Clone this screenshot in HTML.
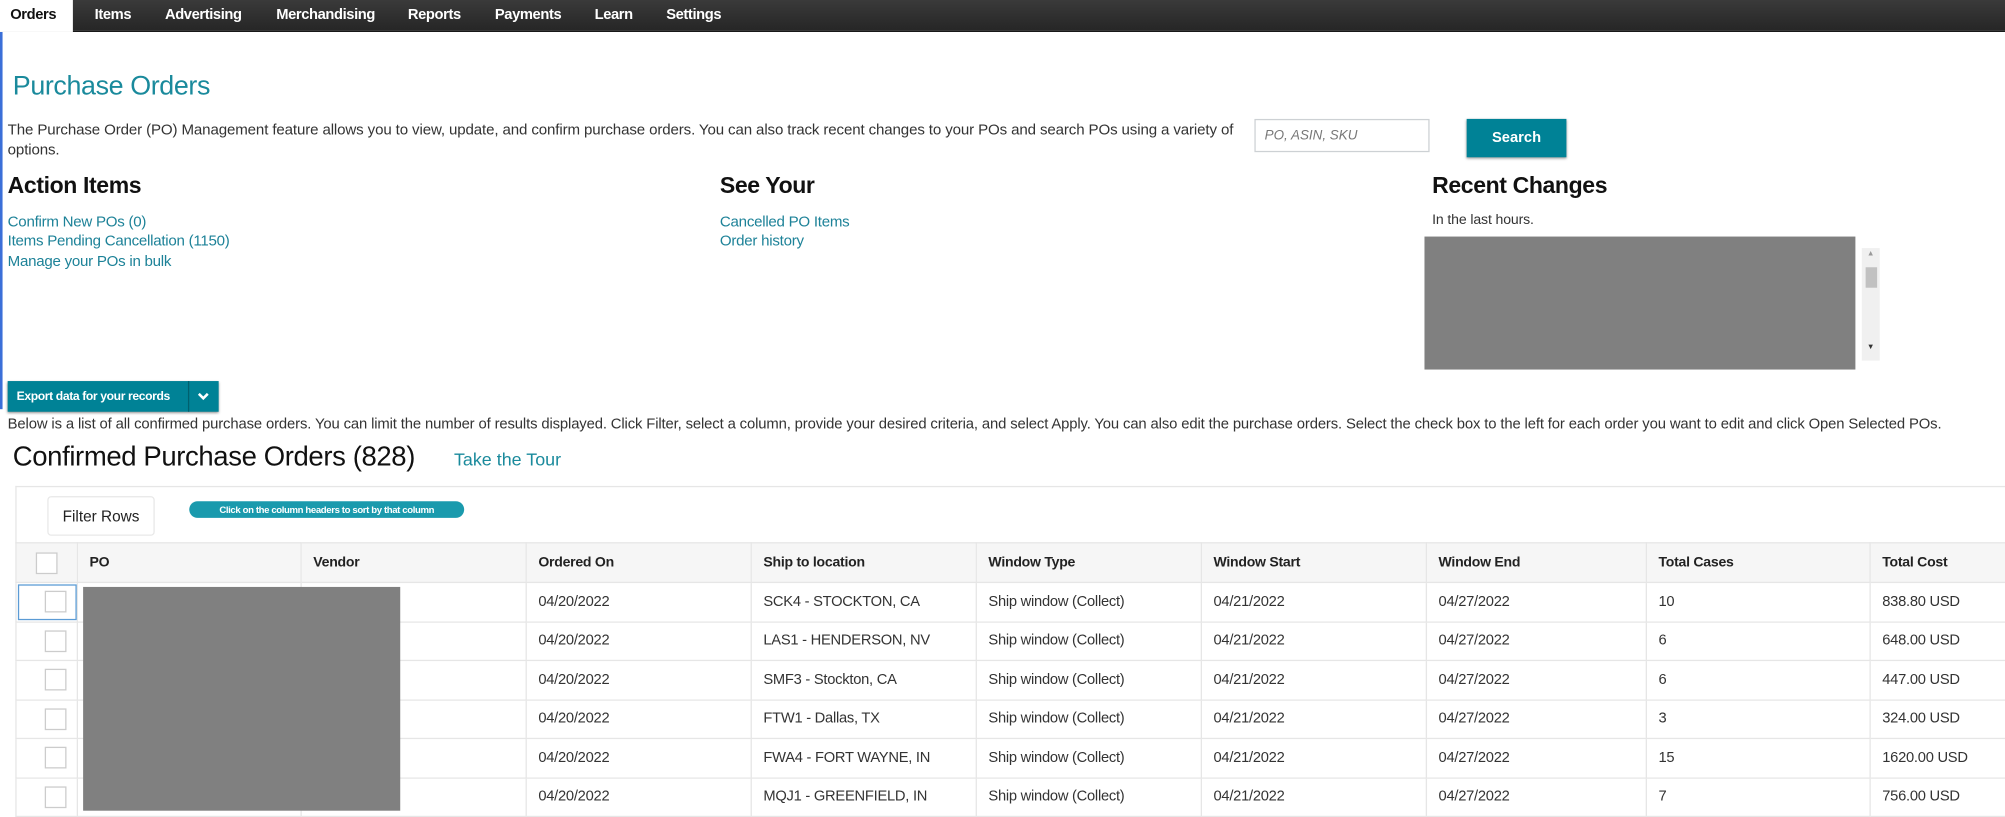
<!DOCTYPE html>
<html><head><meta charset="utf-8"><style>
html,body{margin:0;padding:0;background:#fff;overflow:hidden;width:2005px;height:817px}
#w{position:absolute;left:0;top:0;width:1568px;height:639px;transform:scale(1.27870);transform-origin:0 0;font-family:"Liberation Sans",sans-serif;color:#333}
.a{position:absolute;white-space:nowrap}
#nav{position:absolute;left:0;top:0;width:1568px;height:24px;background:linear-gradient(#3a3a3a,#262626);border-bottom:1px solid #111}
#nav span{position:absolute;top:6px;font-size:11.5px;font-weight:bold;color:#fff;letter-spacing:-0.3px}
.t{color:#1a8a9c}
.l{font-size:11.8px;color:#1d8298;letter-spacing:-0.2px}
h2{margin:0;position:absolute;font-size:18px;font-weight:bold;color:#111;letter-spacing:-0.3px}
.p{font-size:11.8px;color:#333;letter-spacing:-0.1px}
table{position:absolute;left:12px;top:424px;border-collapse:collapse;table-layout:fixed;width:1560px;font-size:11.5px;color:#333}
td,th{border:1px solid #e6e6e6;height:29.5px;padding:0 0 0 9px;text-align:left;white-space:nowrap;overflow:hidden;letter-spacing:-0.2px}
th{background:#f6f6f6;font-weight:bold;color:#222;font-size:11px;height:30px}
.cb{display:inline-block;width:15px;height:15px;border:1px solid #ccc;background:#fff;vertical-align:middle}
</style></head><body><div id="w">
<div style="position:absolute;left:0;top:0;width:2px;height:320px;background:#3b6fd8"></div>
<div id="nav">
<div style="position:absolute;left:0;top:0;width:57px;height:25px;background:#fff"></div>
<span style="left:8px;color:#111">Orders</span><span style="left:74px">Items</span><span style="left:129px">Advertising</span><span style="left:216px">Merchandising</span><span style="left:319px">Reports</span><span style="left:387px">Payments</span><span style="left:465px">Learn</span><span style="left:521px">Settings</span>
</div>
<div class="a t" style="left:10px;top:56px;font-size:21px;letter-spacing:-0.3px">Purchase Orders</div>
<div class="a p" style="left:6px;top:94px">The Purchase Order (PO) Management feature allows you to view, update, and confirm purchase orders. You can also track recent changes to your POs and search POs using a variety of</div>
<div class="a p" style="left:6px;top:110px">options.</div>
<div class="a" style="left:981px;top:93px;width:137px;height:26px;border:1px solid #cdd1d4;box-sizing:border-box"></div>
<div class="a" style="left:989px;top:100px;font-size:10.5px;font-style:italic;color:#777">PO, ASIN, SKU</div>
<div class="a" style="left:1147px;top:93px;width:78px;height:30px;background:#008296;color:#fff;font-size:11.5px;font-weight:bold;text-align:center;line-height:30px;box-shadow:0 1px 2px #999">Search</div>
<h2 style="left:6px;top:135px">Action Items</h2>
<h2 style="left:563px;top:135px">See Your</h2>
<h2 style="left:1120px;top:135px">Recent Changes</h2>
<div class="a l" style="left:6px;top:166px">Confirm New POs (0)</div>
<div class="a l" style="left:6px;top:181px">Items Pending Cancellation (1150)</div>
<div class="a l" style="left:6px;top:197px">Manage your POs in bulk</div>
<div class="a l" style="left:563px;top:166px">Cancelled PO Items</div>
<div class="a l" style="left:563px;top:181px">Order history</div>
<div class="a p" style="left:1120px;top:166px;font-size:11px">In the last hours.</div>
<div class="a" style="left:1114px;top:185px;width:337px;height:104px;background:#808080"></div>
<div class="a" style="left:1456px;top:194px;width:14px;height:88px;background:#f0f0f0"></div>
<div class="a" style="left:1459px;top:209px;width:9px;height:16px;background:#c1c1c1"></div>
<div class="a" style="left:1460px;top:196px;font-size:6px;color:#999">▲</div>
<div class="a" style="left:1460px;top:269px;font-size:6px;color:#333">▼</div>
<div class="a" style="left:6px;top:298px;width:165px;height:24px;background:#008296;box-shadow:0 1px 2px #888"></div>
<div class="a" style="left:147px;top:298px;width:1px;height:24px;background:#00606e"></div>
<div class="a" style="left:13px;top:305px;font-size:9.5px;color:#fff;letter-spacing:-0.3px;font-weight:bold">Export data for your records</div>
<svg class="a" style="left:154px;top:306px" width="10" height="8"><path d="M1.5 2 L5 5.5 L8.5 2" stroke="#fff" stroke-width="2" fill="none"/></svg>
<div class="a p" style="left:6px;top:325px;font-size:11.6px;letter-spacing:-0.1px">Below is a list of all confirmed purchase orders. You can limit the number of results displayed. Click Filter, select a column, provide your desired criteria, and select Apply. You can also edit the purchase orders. Select the check box to the left for each order you want to edit and click Open Selected POs.</div>
<div class="a" style="left:10px;top:345px;font-size:21.5px;color:#111;letter-spacing:-0.3px">Confirmed Purchase Orders (828)</div>
<div class="a t" style="left:355px;top:351px;font-size:14px">Take the Tour</div>
<div class="a" style="left:12px;top:380px;width:1556px;height:44px;border-top:1px solid #e6e6e6;border-left:1px solid #e6e6e6"></div>
<div class="a" style="left:37px;top:388px;width:84px;height:31px;border:1px solid #e8e8e8;border-radius:3px;box-sizing:border-box;font-size:12px;color:#222;text-align:center;line-height:30px">Filter Rows</div>
<div class="a" style="left:148px;top:392px;width:215px;height:13px;border-radius:7px;background:#1a9aad;color:#fff;font-size:7.5px;font-weight:bold;text-align:center;line-height:13px;letter-spacing:-0.3px">Click on the column headers to sort by that column</div>
<table>
<colgroup><col style="width:48px"><col style="width:175px"><col style="width:176px"><col style="width:176px"><col style="width:176px"><col style="width:176px"><col style="width:176px"><col style="width:172px"><col style="width:175px"><col></colgroup>
<tr><th style="padding-left:0;text-align:center"><span class="cb"></span></th><th>PO</th><th>Vendor</th><th>Ordered On</th><th>Ship to location</th><th>Window Type</th><th>Window Start</th><th>Window End</th><th>Total Cases</th><th style="border-right:none">Total Cost</th></tr>
<tr><td style="padding:0 0 0 22px;outline:1px solid #5b9bd5;outline-offset:-2px"><span class="cb"></span></td><td></td><td></td><td>04/20/2022</td><td>SCK4 - STOCKTON, CA</td><td>Ship window (Collect)</td><td>04/21/2022</td><td>04/27/2022</td><td>10</td><td style="border-right:none">838.80 USD</td></tr>
<tr><td style="padding:0 0 0 22px"><span class="cb"></span></td><td></td><td></td><td>04/20/2022</td><td>LAS1 - HENDERSON, NV</td><td>Ship window (Collect)</td><td>04/21/2022</td><td>04/27/2022</td><td>6</td><td style="border-right:none">648.00 USD</td></tr>
<tr><td style="padding:0 0 0 22px"><span class="cb"></span></td><td></td><td></td><td>04/20/2022</td><td>SMF3 - Stockton, CA</td><td>Ship window (Collect)</td><td>04/21/2022</td><td>04/27/2022</td><td>6</td><td style="border-right:none">447.00 USD</td></tr>
<tr><td style="padding:0 0 0 22px"><span class="cb"></span></td><td></td><td></td><td>04/20/2022</td><td>FTW1 - Dallas, TX</td><td>Ship window (Collect)</td><td>04/21/2022</td><td>04/27/2022</td><td>3</td><td style="border-right:none">324.00 USD</td></tr>
<tr><td style="padding:0 0 0 22px"><span class="cb"></span></td><td></td><td></td><td>04/20/2022</td><td>FWA4 - FORT WAYNE, IN</td><td>Ship window (Collect)</td><td>04/21/2022</td><td>04/27/2022</td><td>15</td><td style="border-right:none">1620.00 USD</td></tr>
<tr><td style="padding:0 0 0 22px"><span class="cb"></span></td><td></td><td></td><td>04/20/2022</td><td>MQJ1 - GREENFIELD, IN</td><td>Ship window (Collect)</td><td>04/21/2022</td><td>04/27/2022</td><td>7</td><td style="border-right:none">756.00 USD</td></tr>
</table>
<div class="a" style="left:65px;top:459px;width:248px;height:175px;background:#808080"></div>
</div></body></html>
